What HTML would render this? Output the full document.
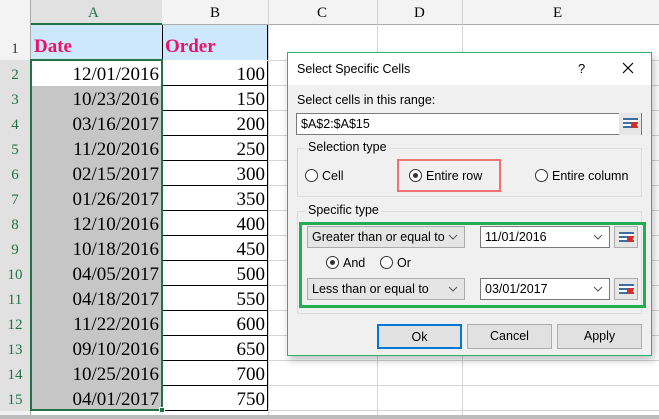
<!DOCTYPE html>
<html><head><style>
*{margin:0;padding:0;box-sizing:border-box}
body{width:659px;height:419px;overflow:hidden;background:#fff;position:relative;font-family:"Liberation Serif",serif}
.a{position:absolute}
.hl{position:absolute;left:268px;width:391px;height:1px;background:#d4d4d4}
.vl{position:absolute;top:0;height:419px;width:1px;background:#d4d4d4}
.rn{position:absolute;left:0;width:30px;text-align:center;font-size:15px;color:#217346;height:25px;line-height:28px}
.ca{position:absolute;left:31px;width:131px;height:25px;text-align:right;padding-right:3px;font-size:19px;line-height:27px;background:#c6c6c6;color:#000}
.cb{position:absolute;left:162px;width:106px;height:25px;text-align:right;padding-right:2px;font-size:19px;line-height:27px;border-left:1px solid #000;border-right:1px solid #000;border-bottom:1px solid #000}
.d{font-family:"Liberation Sans",sans-serif;font-size:12.5px;color:#000}
.btn{position:absolute;top:271px;height:25px;width:85px;background:#e1e1e1;border:1px solid #adadad;text-align:center;line-height:23px}
.rad{display:inline-block;width:13px;height:13px;border:1px solid #333;border-radius:50%;background:#fff;vertical-align:-2px;margin-right:4px;position:relative}
.rad.on::after{content:"";position:absolute;left:3px;top:3px;width:5px;height:5px;border-radius:50%;background:#333}
.ico{position:absolute;width:24px;height:22px;border:1px solid #adadad;background:#e6e6e6}
.ico::before{content:"";position:absolute;left:4px;top:5px;width:15px;height:10px;background:repeating-linear-gradient(#3a6ea5 0 2px,#fff 2px 4px)}
.ico::after{content:"";position:absolute;left:12px;top:9px;width:6px;height:6px;background:#d0302a}
.dd{position:absolute;height:22px;background:#e5e5e5;border:1px solid #acacac;padding-left:4px;line-height:20px}
.tb{position:absolute;height:22px;background:#fff;border:1px solid #7a7a7a;padding-left:4px;line-height:20px}
.chev{position:absolute;right:6px;top:7px;width:10px;height:6px}
</style></head><body>
<div class="a" style="left:0;top:0;width:659px;height:25px;background:#f3f3f3;border-bottom:1px solid #ababab"></div>
<div class="a" style="left:31px;top:0;width:131px;height:25px;background:#e1e1e1;border-bottom:2px solid #217346"></div>
<div class="a" style="left:0;top:0;width:30px;height:419px;background:#f3f3f3"></div>
<div class="a" style="left:0;top:60px;width:30px;height:351px;background:#e1e1e1"></div>
<div class="vl" style="left:30px;background:#ababab"></div>
<div class="vl" style="left:268px"></div><div class="vl" style="left:377px"></div><div class="vl" style="left:462px"></div>
<div class="hl" style="top:60px"></div><div class="hl" style="top:85px"></div><div class="hl" style="top:110px"></div><div class="hl" style="top:135px"></div><div class="hl" style="top:160px"></div><div class="hl" style="top:185px"></div><div class="hl" style="top:210px"></div><div class="hl" style="top:235px"></div><div class="hl" style="top:260px"></div><div class="hl" style="top:285px"></div><div class="hl" style="top:310px"></div><div class="hl" style="top:335px"></div><div class="hl" style="top:360px"></div><div class="hl" style="top:385px"></div><div class="hl" style="top:410px"></div>
<div class="a d" style="left:0;top:0;width:659px;height:25px;font-family:'Liberation Serif',serif;font-size:15px;line-height:27px">
<span class="a" style="left:88px;color:#217346">A</span><span class="a" style="left:210px">B</span><span class="a" style="left:317px">C</span><span class="a" style="left:414px">D</span><span class="a" style="left:553px">E</span></div>
<div class="a" style="left:31px;top:25px;width:237px;height:35px;background:#cce8fa;border-right:1px solid #000"></div>
<div class="a" style="left:162px;top:25px;width:1px;height:35px;background:#000"></div>
<div class="a" style="left:34px;top:36px;font-size:19px;font-weight:bold;color:#e8136b">Date</div>
<div class="a" style="left:165px;top:36px;font-size:19px;font-weight:bold;color:#e8136b">Order</div>
<div class="rn" style="top:35px;color:#333">1</div>

<div class="rn" style="top:61px">2</div><div class="ca" style="top:61px;background:#fff">12/01/2016</div><div class="cb" style="top:61px">100</div>
<div class="rn" style="top:86px">3</div><div class="ca" style="top:86px">10/23/2016</div><div class="cb" style="top:86px">150</div>
<div class="rn" style="top:111px">4</div><div class="ca" style="top:111px">03/16/2017</div><div class="cb" style="top:111px">200</div>
<div class="rn" style="top:136px">5</div><div class="ca" style="top:136px">11/20/2016</div><div class="cb" style="top:136px">250</div>
<div class="rn" style="top:161px">6</div><div class="ca" style="top:161px">02/15/2017</div><div class="cb" style="top:161px">300</div>
<div class="rn" style="top:186px">7</div><div class="ca" style="top:186px">01/26/2017</div><div class="cb" style="top:186px">350</div>
<div class="rn" style="top:211px">8</div><div class="ca" style="top:211px">12/10/2016</div><div class="cb" style="top:211px">400</div>
<div class="rn" style="top:236px">9</div><div class="ca" style="top:236px">10/18/2016</div><div class="cb" style="top:236px">450</div>
<div class="rn" style="top:261px">10</div><div class="ca" style="top:261px">04/05/2017</div><div class="cb" style="top:261px">500</div>
<div class="rn" style="top:286px">11</div><div class="ca" style="top:286px">04/18/2017</div><div class="cb" style="top:286px">550</div>
<div class="rn" style="top:311px">12</div><div class="ca" style="top:311px">11/22/2016</div><div class="cb" style="top:311px">600</div>
<div class="rn" style="top:336px">13</div><div class="ca" style="top:336px">09/10/2016</div><div class="cb" style="top:336px">650</div>
<div class="rn" style="top:361px">14</div><div class="ca" style="top:361px">10/25/2016</div><div class="cb" style="top:361px">700</div>
<div class="rn" style="top:386px">15</div><div class="ca" style="top:386px">04/01/2017</div><div class="cb" style="top:386px">750</div>
<div class="a" style="left:30px;top:59px;width:133px;height:352px;border:2px solid #217346"></div>
<div class="a" style="left:159px;top:407px;width:6px;height:6px;background:#217346;border:1px solid #fff"></div>
<div class="a" style="left:0;top:415px;width:659px;height:4px;background:#bcbcbc"></div>

<!-- dialog -->
<div class="a d" style="left:287px;top:52px;width:365px;height:304px;background:#f0f0f0;border:1px solid #2bb56c;box-shadow:2px 4px 8px rgba(0,0,0,.25)">
<div class="a" style="left:0;top:0;width:363px;height:32px;background:#fff"></div>
<div class="a" style="left:9px;top:9px">Select Specific Cells</div>
<div class="a" style="left:290px;top:8px;font-size:13px">?</div>
<svg class="a" style="left:334px;top:9px" width="12" height="12"><path d="M1 1L11 11M11 1L1 11" stroke="#000" stroke-width="1.2"/></svg>
<div class="a" style="left:9px;top:40px">Select cells in this range:</div>
<div class="tb" style="left:8px;top:60px;width:346px">$A$2:$A$15</div>
<div class="ico" style="left:331px;top:60px;width:22px;border:none;background:#e6e6e6"></div>
<div class="a" style="left:9px;top:95px;width:345px;height:49px;border:1px solid #dcdcdc"></div>
<div class="a" style="left:18px;top:87px;background:#f0f0f0;padding:0 2px">Selection type</div>
<div class="a" style="left:17px;top:116px"><span class="rad"></span>Cell</div>
<div class="a" style="left:109px;top:106px;width:104px;height:33px;border:2px solid #f07272"></div>
<div class="a" style="left:121px;top:116px"><span class="rad on"></span>Entire row</div>
<div class="a" style="left:247px;top:116px"><span class="rad"></span>Entire column</div>
<div class="a" style="left:9px;top:158px;width:345px;height:103px;border:1px solid #dcdcdc"></div>
<div class="a" style="left:18px;top:150px;background:#f0f0f0;padding:0 2px">Specific type</div>
<div class="a" style="left:11px;top:169px;width:347px;height:86px;border:3px solid #23ad52"></div>
<div class="dd" style="left:19px;top:173px;width:158px">Greater than or equal to<svg class="chev"><path d="M1 1L5 5L9 1" fill="none" stroke="#555"/></svg></div>
<div class="tb" style="left:192px;top:173px;width:130px">11/01/2016<svg class="chev"><path d="M1 1L5 5L9 1" fill="none" stroke="#555"/></svg></div>
<div class="ico" style="left:326px;top:173px"></div>
<div class="a" style="left:38px;top:203px"><span class="rad on"></span>And</div>
<div class="a" style="left:92px;top:203px"><span class="rad"></span>Or</div>
<div class="dd" style="left:19px;top:225px;width:158px">Less than or equal to<svg class="chev"><path d="M1 1L5 5L9 1" fill="none" stroke="#555"/></svg></div>
<div class="tb" style="left:192px;top:225px;width:130px">03/01/2017<svg class="chev"><path d="M1 1L5 5L9 1" fill="none" stroke="#555"/></svg></div>
<div class="ico" style="left:326px;top:225px"></div>
<div class="btn" style="left:89px;border:2px solid #0078d7">Ok</div>
<div class="btn" style="left:179px">Cancel</div>
<div class="btn" style="left:269px">Apply</div>
</div>
</body></html>
